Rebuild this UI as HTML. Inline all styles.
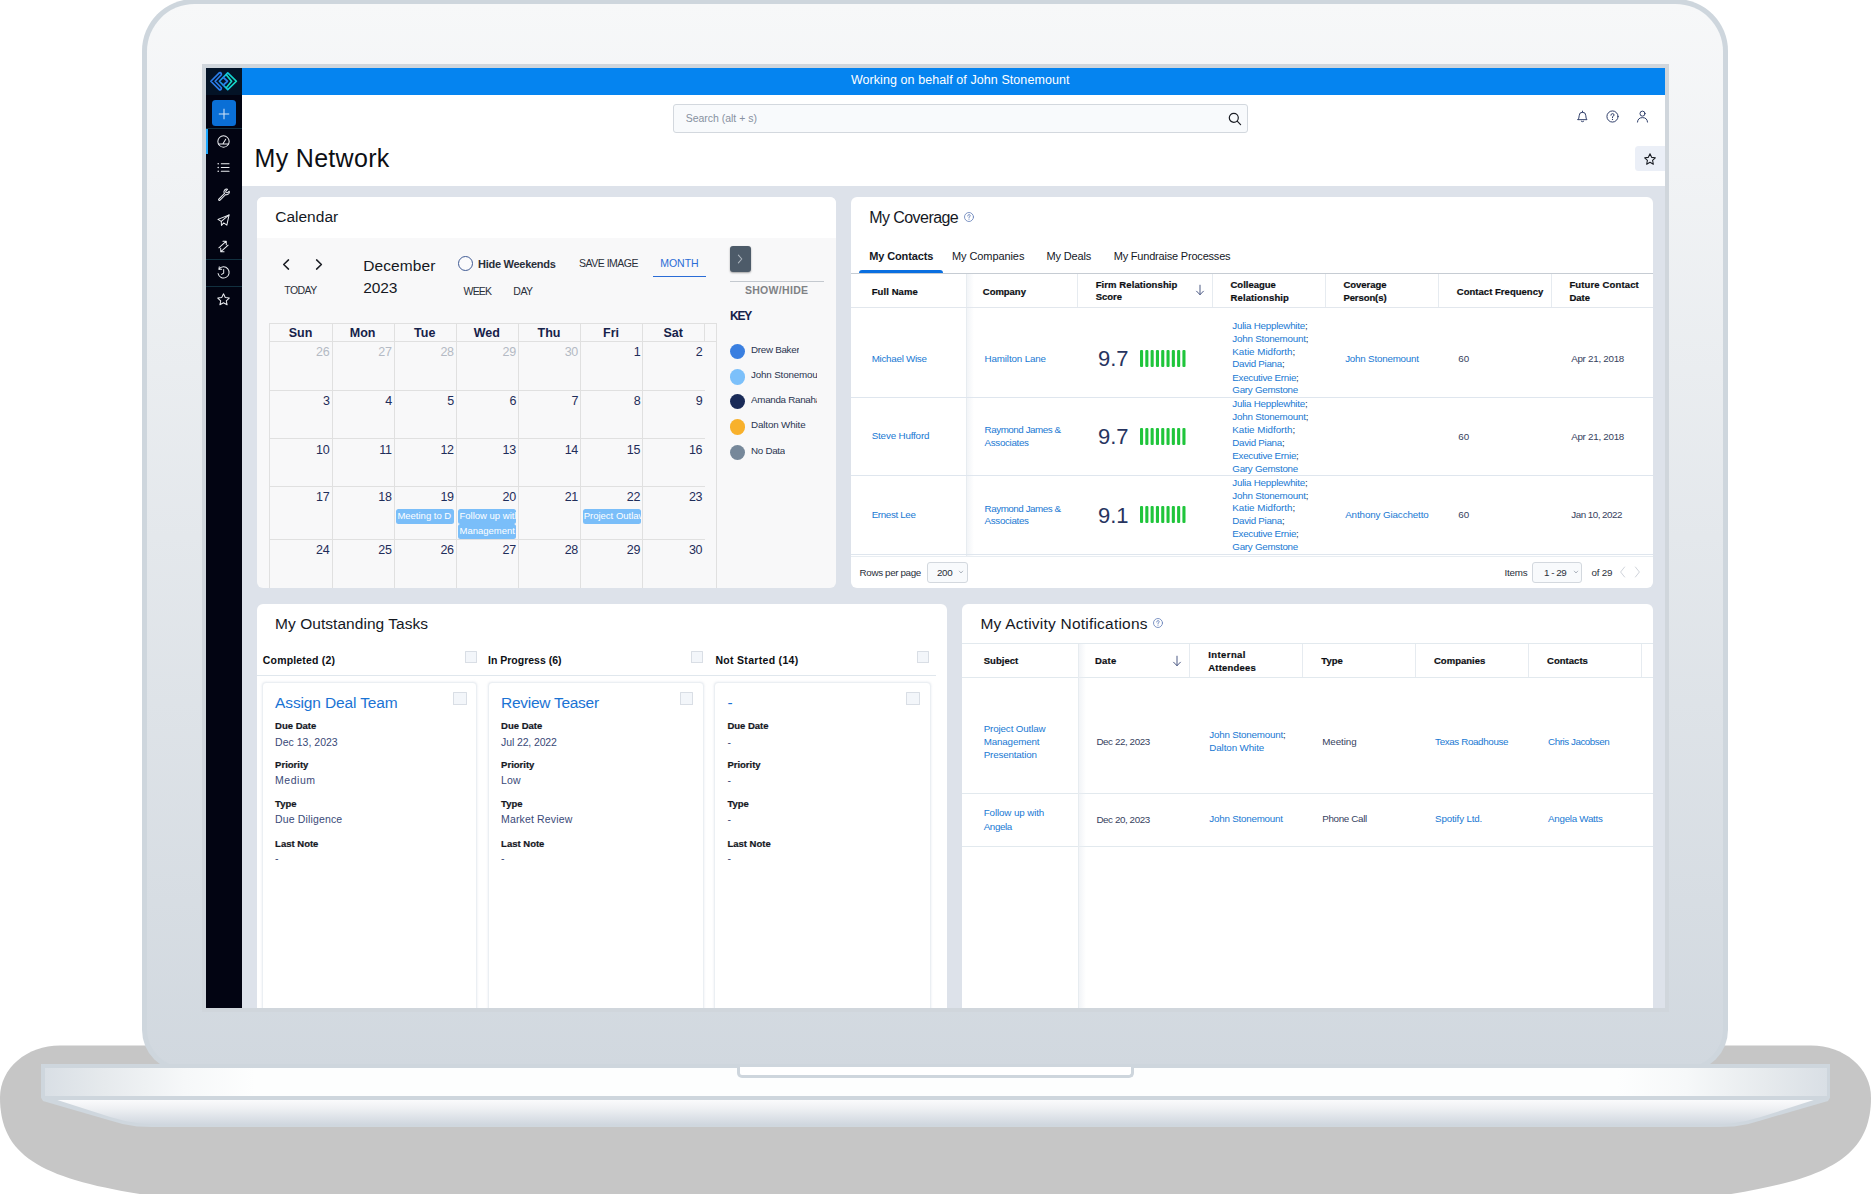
<!DOCTYPE html>
<html lang="en">
<head>
<meta charset="utf-8">
<title>My Network</title>
<style>
*{box-sizing:border-box;margin:0;padding:0}
html,body{width:1871px;height:1194px;overflow:hidden;background:#fff;font-family:"Liberation Sans",sans-serif;}
#stage{position:absolute;left:0;top:0;width:1871px;height:1194px;overflow:hidden;background:#fff}
#shadow{position:absolute;left:0;top:0}
#lid{position:absolute;left:142px;top:-1px;width:1586px;height:1073px;
  border-radius:52px 52px 42.3px 42.3px;
  background:#ced6dd;}
#lidin{position:absolute;left:146.7px;top:3.6px;width:1576.6px;height:1063.7px;
  border-radius:47.5px 47.5px 37.6px 37.6px;
  background:linear-gradient(to bottom,rgb(247,248,249) 0px,rgb(209,216,223) 1064px);}
#bezel{position:absolute;left:202px;top:63.5px;width:1467px;height:948.5px;background:#d0d6dc}
#base{position:absolute;left:41px;top:1064px;width:1789px;height:36px;background:#ced6dd;border-radius:0 0 4px 4px}
#basein{position:absolute;left:44.5px;top:1068px;width:1782px;height:27.9px;
  background:linear-gradient(to right,#d9dfe5 0,#e6eaed 60px,#f6f8f9 140px,#fdfefe 210px,#fdfefe 1572px,#f6f8f9 1642px,#e6eaed 1722px,#d9dfe5 1782px)}
#notch{position:absolute;left:736.5px;top:1067px;width:397.5px;height:11px;border:3px solid #ced6dd;border-top:none;border-radius:0 0 5px 5px;background:#fff}
#screen{position:absolute;left:206px;top:68px;width:1459px;height:940px;overflow:hidden;background:#dde2ea}
#ui{position:absolute;left:-206px;top:-68px;width:1871px;height:1194px}
.t{position:absolute;white-space:nowrap}
.a{position:absolute}
.card{position:absolute;background:#fff;border-radius:6px;overflow:hidden}
.vl{position:absolute;width:1px;background:#e6ebf0}
.hl{position:absolute;height:1px;background:#e0e7ed}
.cb{position:absolute;border:1px solid #d9dee5;background:#f3f6fa;border-radius:0.5px}
svg{position:absolute;overflow:visible}
</style>
</head>
<body>
<div id="stage">
<svg id="shadow" width="1871" height="1194" viewBox="0 0 1871 1194">
  <path fill="#c6c6c6" d="M150 1045.5 L60 1045.5 C27 1045.5 0 1068 0 1097.5 C0 1155 40 1178 139.8 1194 L1731.2 1194 C1831 1178 1871 1155 1871 1097.5 C1871 1068 1844 1045.5 1811 1045.5 L1721 1045.5 Z"/>
</svg>
<div id="lid"></div>
<div id="lidin"></div>
<svg width="1871" height="1194" viewBox="0 0 1871 1194">
  <defs>
    <linearGradient id="lg1" x1="0" y1="1099" x2="0" y2="1127" gradientUnits="userSpaceOnUse">
      <stop offset="0" stop-color="#fcfcfd"/><stop offset="0.35" stop-color="#eef0f3"/><stop offset="1" stop-color="#cbd3dc"/>
    </linearGradient>
  </defs>
  <path fill="#cfd7de" d="M41.1 1096 L41.1 1097.2 L43 1101 L110.2 1120.4 Q124 1125 137 1126.6 L152 1127.1 L1719 1127.1 L1734 1126.6 Q1747 1125 1760.8 1120.4 L1828 1101 L1829.9 1097.2 L1829.9 1096 Z"/>
  <path fill="url(#lg1)" d="M55.7 1099.6 L110.2 1117.1 Q124 1121.6 140 1123.6 L160 1125.2 L1711 1125.2 L1731 1123.6 Q1747 1121.6 1760.8 1117.1 L1815.3 1099.6 Z"/>
</svg>
<div id="base"></div>
<div id="basein"></div>
<div id="notch"></div>
<div id="bezel"></div>
<div id="screen"><div id="ui">
<div class="a" style="left:242px;top:95px;width:1423px;height:90.7px;background:#fff"></div>
<div class="a" style="left:242px;top:68px;width:1423px;height:27px;background:#0584f0"></div>
<div class="a" style="left:206px;top:68px;width:36px;height:940px;background:#020412"></div>
<div class="a" style="left:206px;top:68px;width:36px;height:27px;background:#031326"></div>
<svg style="left:204px;top:66px" width="40" height="30" viewBox="0 0 160 120">
<defs><linearGradient id="lgT" x1="60" y1="0" x2="130" y2="0" gradientUnits="userSpaceOnUse"><stop offset="0" stop-color="#1f86ea"/><stop offset="0.45" stop-color="#12c6e0"/><stop offset="1" stop-color="#14e0c2"/></linearGradient></defs>
<g fill="none" stroke-width="6.8" stroke-linejoin="round" stroke-linecap="round">
<path stroke="#2b7de9" d="M61 27.5 L27.5 61 L61 94.5 Q66 97 69 91 L69.5 87 L44.5 61 L69.5 35 L69 30 Q66 25 61 27.5 Z"/>
<path stroke="url(#lgT)" d="M95 27.5 L129.5 61 L95 94.5 L61.5 61 Z"/>
<path stroke="#16d8c8" d="M90 36 L110.5 61 L90 86"/>
<path stroke="#2b7de9" d="M77.5 46 L94 61 L77.5 76"/>
</g></svg>
<div class="a" style="left:211.6px;top:100.2px;width:24.4px;height:26px;background:#0a6fd6;border-radius:3.5px"></div>
<svg style="left:217.6px;top:108px" width="12" height="12" viewBox="0 0 12 12"><path d="M6 0.8V11.2M0.8 6H11.2" stroke="#d4e5f8" stroke-width="1.05" fill="none"/></svg>
<div class="a" style="left:206px;top:127.5px;width:36px;height:1px;background:#12303f"></div>
<div class="a" style="left:206px;top:259.0px;width:36px;height:1px;background:#12303f"></div>
<div class="a" style="left:206px;top:285.8px;width:36px;height:1px;background:#12303f"></div>
<div class="a" style="left:206px;top:128.6px;width:2px;height:25.4px;background:#1ea7fd"></div>
<svg style="left:217.1px;top:134.7px" width="13" height="13" viewBox="0 0 14 14"><g fill="none" stroke="#eceef2" stroke-width="1.08" stroke-linecap="round" stroke-linejoin="round"><circle cx="7" cy="7" r="6.1"/><path d="M1.6 9.6H12.4M6.4 9.4L9.4 4.6"/></g></svg>
<svg style="left:217.1px;top:160.9px" width="13" height="13" viewBox="0 0 14 14"><g fill="none" stroke="#eceef2" stroke-width="1.08" stroke-linecap="round" stroke-linejoin="round"><path d="M4.6 3H13M4.6 7H13M4.6 11H13"/><path stroke-width="1.7" d="M1.3 3h.01M1.3 7h.01M1.3 11h.01"/></g></svg>
<svg style="left:216.9px;top:187.5px" width="13" height="13" viewBox="0 0 14 14"><g fill="none" stroke="#eceef2" stroke-width="1.08" stroke-linecap="round" stroke-linejoin="round"><path d="M8.2 5.8 L2.2 11.8 Q1.2 12.9 2.1 13.2 Q2.9 13.6 3.6 12.8 L9.4 7 Q11.6 7.6 12.8 6 Q13.6 4.8 13.2 3.4 L11.2 5.2 L9.7 4.9 L9.4 3.3 L11.3 1.4 Q9.6 0.8 8.3 2 Q7 3.4 7.6 5.2 Z"/></g></svg>
<svg style="left:216.9px;top:213.5px" width="13" height="13" viewBox="0 0 14 14"><g fill="none" stroke="#eceef2" stroke-width="1.08" stroke-linecap="round" stroke-linejoin="round"><path d="M13 1 L1 5.8 L4.6 8 L4.8 12.4 L7.2 9.6 L10.6 12 Z"/><path d="M13 1 L4.6 8"/></g></svg>
<svg style="left:216.9px;top:239.9px" width="13" height="13" viewBox="0 0 14 14"><g fill="none" stroke="#eceef2" stroke-width="1.08" stroke-linecap="round" stroke-linejoin="round"><path d="M2 8.4 L9.8 1.6 M6.4 1.4 H10 V5"/><path d="M12 5.6 L4.2 12.4 M7.6 12.6 H4 V9"/></g></svg>
<svg style="left:216.9px;top:266.3px" width="13" height="13" viewBox="0 0 14 14"><g fill="none" stroke="#eceef2" stroke-width="1.08" stroke-linecap="round" stroke-linejoin="round"><path d="M2.2 3.4 A6 6 0 1 1 1.2 8.2"/><path d="M2.4 0.8 L2.2 3.6 L5 3.6"/><path d="M7.2 3.8 V7.6 L5 9"/></g></svg>
<svg style="left:216.9px;top:293.1px" width="13" height="13" viewBox="0 0 14 14"><g fill="none" stroke="#eceef2" stroke-width="1.08" stroke-linecap="round" stroke-linejoin="round"><path d="M7 0.9 L8.9 4.9 L13.2 5.4 L10 8.4 L10.9 12.7 L7 10.5 L3.1 12.7 L4 8.4 L0.8 5.4 L5.1 4.9 Z"/></g></svg>
<div class="a" style="left:672.8px;top:104px;width:574.8px;height:29.4px;background:#f8fafc;border:1px solid #d3d8de;border-radius:3px"></div>
<svg style="left:1228px;top:112px" width="14" height="14" viewBox="0 0 14 14"><g fill="none" stroke="#1a1d24" stroke-width="1.2" stroke-linecap="round"><circle cx="5.8" cy="5.8" r="4.5"/><path d="M9.2 9.2L12.6 12.6"/></g></svg>
<svg style="left:1575.9px;top:110px" width="13" height="13" viewBox="0 0 14 14"><g fill="none" stroke="#2a3a66" stroke-width="1.05" stroke-linecap="round" stroke-linejoin="round"><path d="M2.2 10.4 H11.8 Q10.6 9.2 10.6 6.2 Q10.6 2.4 7 2.4 Q3.4 2.4 3.4 6.2 Q3.4 9.2 2.2 10.4 Z"/><path d="M5.8 12.2 Q7 13.2 8.2 12.2"/><path d="M7 1.2V2.4"/></g></svg>
<svg style="left:1606.1px;top:109.9px" width="13" height="13" viewBox="0 0 14 14"><g fill="none" stroke="#2a3a66" stroke-width="1.05" stroke-linecap="round" stroke-linejoin="round"><circle cx="7" cy="7" r="6"/><path d="M5.3 5.6 Q5.3 3.9 7 3.9 Q8.7 3.9 8.7 5.4 Q8.7 6.4 7 7.2 V8.2"/><path stroke-width="1.3" d="M7 10.1h.01"/></g></svg>
<svg style="left:1636.1px;top:109.7px" width="13" height="13" viewBox="0 0 14 14"><g fill="none" stroke="#2a3a66" stroke-width="1.05" stroke-linecap="round" stroke-linejoin="round"><circle cx="7" cy="3.9" r="2.7"/><path d="M1.6 13 Q2 8.2 7 8.2 Q12 8.2 12.4 13"/></g></svg>
<div class="a" style="left:1635.4px;top:146.3px;width:40px;height:25.1px;background:#ebeff7;border-radius:3.5px"></div>
<svg style="left:1644.1px;top:152.8px" width="12" height="12.4" viewBox="0 0 14 14" preserveAspectRatio="none"><path fill="none" stroke="#1a1d24" stroke-width="1.25" stroke-linejoin="round" d="M7 0.9 L8.9 4.9 L13.2 5.4 L10 8.4 L10.9 12.7 L7 10.5 L3.1 12.7 L4 8.4 L0.8 5.4 L5.1 4.9 Z"/></svg>
<div class="card" style="left:257px;top:197px;width:579.3px;height:391.3px;background:#f8f8f9"><div class="a" style="left:0;top:0;width:100%;height:40.5px;background:#fff"></div></div>
<svg style="left:281px;top:258px" width="10" height="13" viewBox="0 0 10 13"><path fill="none" stroke="#1a1d24" stroke-width="1.5" stroke-linecap="round" stroke-linejoin="round" d="M7.5 1.9 L2.7 6.5 L7.5 11.1"/></svg>
<svg style="left:313.6px;top:258px" width="10" height="13" viewBox="0 0 10 13"><path fill="none" stroke="#1a1d24" stroke-width="1.5" stroke-linecap="round" stroke-linejoin="round" d="M2.6 1.9 L7.4 6.5 L2.6 11.1"/></svg>
<div class="a" style="left:457.7px;top:255.5px;width:15.6px;height:15.6px;border:1.4px solid #405a94;border-radius:50%;background:#fbfbfc"></div>
<div class="a" style="left:652.8px;top:275.7px;width:53.2px;height:1.3px;background:#2a6cd6"></div>
<div class="a" style="left:729.8px;top:246px;width:20.8px;height:26.4px;background:#4d5b69;border-radius:3px;box-shadow:0 1px 2px rgba(0,0,0,.35)"></div>
<svg style="left:736px;top:254px" width="8" height="10" viewBox="0 0 8 10"><path fill="none" stroke="#aab3bc" stroke-width="1.1" stroke-linecap="round" stroke-linejoin="round" d="M2.4 1.2 L5.8 5 L2.4 8.8"/></svg>
<div class="a" style="left:730px;top:281px;width:94px;height:1px;background:#c4c9cf"></div>
<div class="a" style="left:729.8px;top:343.5px;width:15.4px;height:15.4px;border-radius:50%;background:#3a7fe0"></div>
<div class="a" style="left:729.8px;top:369.2px;width:15.4px;height:15.4px;border-radius:50%;background:#7cc0fa"></div>
<div class="a" style="left:729.8px;top:394.1px;width:15.4px;height:15.4px;border-radius:50%;background:#1a2b58"></div>
<div class="a" style="left:729.8px;top:419.2px;width:15.4px;height:15.4px;border-radius:50%;background:#f8b12c"></div>
<div class="a" style="left:729.8px;top:444.9px;width:15.4px;height:15.4px;border-radius:50%;background:#76889a"></div>
<div class="a" style="left:269.40px;top:323.4px;width:1px;height:265.1px;background:#e0e0e0"></div>
<div class="a" style="left:331.53px;top:323.4px;width:1px;height:265.1px;background:#e0e0e0"></div>
<div class="a" style="left:393.66px;top:323.4px;width:1px;height:265.1px;background:#e0e0e0"></div>
<div class="a" style="left:455.79px;top:323.4px;width:1px;height:265.1px;background:#e0e0e0"></div>
<div class="a" style="left:517.92px;top:323.4px;width:1px;height:265.1px;background:#e0e0e0"></div>
<div class="a" style="left:580.05px;top:323.4px;width:1px;height:265.1px;background:#e0e0e0"></div>
<div class="a" style="left:642.18px;top:323.4px;width:1px;height:265.1px;background:#e0e0e0"></div>
<div class="a" style="left:704.31px;top:323.4px;width:1px;height:17.6px;background:#e0e0e0"></div>
<div class="a" style="left:716.1px;top:323.4px;width:1px;height:265.1px;background:#e0e0e0"></div>
<div class="a" style="left:269.4px;top:322.9px;width:447.2px;height:1px;background:#e0e0e0"></div>
<div class="a" style="left:269.4px;top:340.5px;width:447.2px;height:1px;background:#e0e0e0"></div>
<div class="a" style="left:269.4px;top:390.0px;width:435.4px;height:1px;background:#e0e0e0"></div>
<div class="a" style="left:269.4px;top:438.2px;width:435.4px;height:1px;background:#e0e0e0"></div>
<div class="a" style="left:269.4px;top:485.7px;width:435.4px;height:1px;background:#e0e0e0"></div>
<div class="a" style="left:269.4px;top:538.9px;width:435.4px;height:1px;background:#e0e0e0"></div>
<div class="a" style="left:396.2px;top:508.9px;width:58.1px;height:14.8px;background:#7abef9;border-radius:2.5px;overflow:hidden"><span class="t" style="left:1.2px;top:0;font-size:9.5px;line-height:14.8px;color:#fff">Meeting to D</span></div>
<div class="a" style="left:458.3px;top:508.9px;width:58.1px;height:14.9px;background:#7abef9;border-radius:2.5px;overflow:hidden"><span class="t" style="left:1.2px;top:0;font-size:9.5px;line-height:14.9px;color:#fff">Follow up with</span></div>
<div class="a" style="left:458.3px;top:524.1px;width:58.1px;height:14.6px;background:#7abef9;border-radius:2.5px;overflow:hidden"><span class="t" style="left:1.2px;top:0;font-size:9.5px;line-height:14.6px;color:#fff">Management</span></div>
<div class="a" style="left:582.5px;top:508.9px;width:58.1px;height:14.8px;background:#7abef9;border-radius:2.5px;overflow:hidden"><span class="t" style="left:1.2px;top:0;font-size:9.5px;line-height:14.8px;color:#fff">Project Outlaw</span></div>
<div class="card" style="left:851px;top:197.4px;width:801.7px;height:391.0px"></div>
<svg style="left:963.4px;top:211px" width="12" height="12" viewBox="0 0 12 12"><g fill="none" stroke="#6a84bb" stroke-width="0.85" stroke-linecap="round"><circle cx="6" cy="6" r="4.5"/><path d="M4.7 5 Q4.7 3.6 6 3.6 Q7.3 3.6 7.3 4.8 Q7.3 5.6 6 6.2 V6.9"/><path stroke-width="1" d="M6 8.3h.01"/></g></svg>
<div class="a" style="left:851px;top:272.8px;width:801.7px;height:1px;background:#c6ccd3"></div>
<div class="a" style="left:859px;top:270px;width:84px;height:3.4px;background:#0a6fe0;border-radius:3px 3px 0 0"></div>
<div class="vl" style="left:1077.0px;top:274px;height:33.3px"></div>
<div class="vl" style="left:1211.8px;top:274px;height:33.3px"></div>
<div class="vl" style="left:1324.7px;top:274px;height:33.3px"></div>
<div class="vl" style="left:1437.5px;top:274px;height:33.3px"></div>
<div class="vl" style="left:1550.5px;top:274px;height:33.3px"></div>
<div class="a" style="left:965.7px;top:274px;width:9px;height:282px;background:linear-gradient(to right,#e7ecf0 0,#e7ecf0 1px,rgba(233,237,242,.6) 1px,rgba(255,255,255,0) 8px)"></div>
<div class="hl" style="left:851px;top:306.8px;width:801.7px;background:#e2e7ed"></div>
<div class="hl" style="left:851px;top:397.2px;width:801.7px;background:#dfe6ee"></div>
<div class="hl" style="left:851px;top:475.0px;width:801.7px;background:#dfe6ee"></div>
<div class="hl" style="left:851px;top:553.7px;width:801.7px;background:#dfe6ee"></div>
<div class="hl" style="left:851px;top:556.1px;width:801.7px;background:#e8edf2"></div>
<svg style="left:1194.7px;top:284.2px" width="10" height="12" viewBox="0 0 10 12"><path fill="none" stroke="#3b4a78" stroke-width="0.9" stroke-linecap="round" stroke-linejoin="round" d="M5 1.2 V10.6 M1.6 7.2 L5 10.7 L8.4 7.2"/></svg>
<svg style="left:1140.2px;top:350px" width="46" height="17.0" fill="#1fc53b"><rect x="0.00" y="0" width="3.1" height="17.0" rx="1.1"/><rect x="5.30" y="0" width="3.1" height="17.0" rx="1.1"/><rect x="10.60" y="0" width="3.1" height="17.0" rx="1.1"/><rect x="15.90" y="0" width="3.1" height="17.0" rx="1.1"/><rect x="21.20" y="0" width="3.1" height="17.0" rx="1.1"/><rect x="26.50" y="0" width="3.1" height="17.0" rx="1.1"/><rect x="31.80" y="0" width="3.1" height="17.0" rx="1.1"/><rect x="37.10" y="0" width="3.1" height="17.0" rx="1.1"/><rect x="42.40" y="0" width="3.1" height="17.0" rx="1.1"/></svg>
<svg style="left:1140.2px;top:428px" width="46" height="17.0" fill="#1fc53b"><rect x="0.00" y="0" width="3.1" height="17.0" rx="1.1"/><rect x="5.30" y="0" width="3.1" height="17.0" rx="1.1"/><rect x="10.60" y="0" width="3.1" height="17.0" rx="1.1"/><rect x="15.90" y="0" width="3.1" height="17.0" rx="1.1"/><rect x="21.20" y="0" width="3.1" height="17.0" rx="1.1"/><rect x="26.50" y="0" width="3.1" height="17.0" rx="1.1"/><rect x="31.80" y="0" width="3.1" height="17.0" rx="1.1"/><rect x="37.10" y="0" width="3.1" height="17.0" rx="1.1"/><rect x="42.40" y="0" width="3.1" height="17.0" rx="1.1"/></svg>
<svg style="left:1140.2px;top:506.4px" width="46" height="17.0" fill="#1fc53b"><rect x="0.00" y="0" width="3.1" height="17.0" rx="1.1"/><rect x="5.30" y="0" width="3.1" height="17.0" rx="1.1"/><rect x="10.60" y="0" width="3.1" height="17.0" rx="1.1"/><rect x="15.90" y="0" width="3.1" height="17.0" rx="1.1"/><rect x="21.20" y="0" width="3.1" height="17.0" rx="1.1"/><rect x="26.50" y="0" width="3.1" height="17.0" rx="1.1"/><rect x="31.80" y="0" width="3.1" height="17.0" rx="1.1"/><rect x="37.10" y="0" width="3.1" height="17.0" rx="1.1"/><rect x="42.40" y="0" width="3.1" height="17.0" rx="1.1"/></svg>
<div class="a" style="left:926.5px;top:561.6px;width:41.3px;height:21.8px;background:#f8fafc;border:1px solid #d3d8de;border-radius:3px"></div>
<svg style="left:958.3px;top:569.6px" width="6" height="4" viewBox="0 0 6 4"><path fill="none" stroke="#9aa3af" stroke-width="0.8" d="M1 0.8 L3 3 L5 0.8"/></svg>
<div class="a" style="left:1532.3px;top:561.8px;width:49.7px;height:21.6px;background:#f8fafc;border:1px solid #d3d8de;border-radius:3px"></div>
<svg style="left:1572.8px;top:569.6px" width="6" height="4" viewBox="0 0 6 4"><path fill="none" stroke="#9aa3af" stroke-width="0.8" d="M1 0.8 L3 3 L5 0.8"/></svg>
<svg style="left:1617.9px;top:566.3px" width="9" height="12" viewBox="0 0 9 12"><path fill="none" stroke="#c9ced6" stroke-width="0.9" stroke-linecap="round" stroke-linejoin="round" d="M6.6 1 L2.6 6 L6.6 11"/></svg>
<svg style="left:1632.8px;top:566.3px" width="9" height="12" viewBox="0 0 9 12"><path fill="none" stroke="#c9ced6" stroke-width="0.9" stroke-linecap="round" stroke-linejoin="round" d="M2.4 1 L6.4 6 L2.4 11"/></svg>
<div class="card" style="left:257px;top:604px;width:690px;height:420px"></div>
<div class="cb" style="left:465.3px;top:651.2px;width:12.2px;height:12.2px"></div>
<div class="cb" style="left:691.1px;top:651.2px;width:12.2px;height:12.2px"></div>
<div class="cb" style="left:917.2px;top:651.2px;width:12.2px;height:12.2px"></div>
<div class="hl" style="left:257px;top:674.8px;width:678.5px"></div>
<div class="a" style="left:262.1px;top:682.2px;width:215.4px;height:340px;border:1px solid #ebeff3;border-radius:4px;background:#fff;box-shadow:0 0 2.5px rgba(170,180,198,.3)"></div>
<div class="cb" style="left:453.1px;top:691.8px;width:13.6px;height:13.6px"></div>
<div class="a" style="left:488.1px;top:682.2px;width:216.2px;height:340px;border:1px solid #ebeff3;border-radius:4px;background:#fff;box-shadow:0 0 2.5px rgba(170,180,198,.3)"></div>
<div class="cb" style="left:679.9px;top:691.8px;width:13.6px;height:13.6px"></div>
<div class="a" style="left:714.4px;top:682.2px;width:216.4px;height:340px;border:1px solid #ebeff3;border-radius:4px;background:#fff;box-shadow:0 0 2.5px rgba(170,180,198,.3)"></div>
<div class="cb" style="left:906.4px;top:691.8px;width:13.6px;height:13.6px"></div>
<div class="card" style="left:962.2px;top:604px;width:690.5px;height:420px"></div>
<svg style="left:1152.4px;top:617.3px" width="12" height="12" viewBox="0 0 12 12"><g fill="none" stroke="#6a84bb" stroke-width="0.85" stroke-linecap="round"><circle cx="6" cy="6" r="4.5"/><path d="M4.7 5 Q4.7 3.6 6 3.6 Q7.3 3.6 7.3 4.8 Q7.3 5.6 6 6.2 V6.9"/><path stroke-width="1" d="M6 8.3h.01"/></g></svg>
<div class="hl" style="left:962.2px;top:642.9px;width:690.5px;background:#e2e9ee"></div>
<div class="hl" style="left:962.2px;top:676.5px;width:690.5px;background:#e2e9ee"></div>
<div class="hl" style="left:962.2px;top:792.7px;width:690.5px;background:#e2e9ee"></div>
<div class="hl" style="left:962.2px;top:845.8px;width:690.5px;background:#e2e9ee"></div>
<div class="vl" style="left:1189.0px;top:644px;height:33px"></div>
<div class="vl" style="left:1302.0px;top:644px;height:33px"></div>
<div class="vl" style="left:1415.0px;top:644px;height:33px"></div>
<div class="vl" style="left:1528.0px;top:644px;height:33px"></div>
<div class="vl" style="left:1641.0px;top:644px;height:33px"></div>
<div class="a" style="left:1077.5px;top:644px;width:9px;height:380px;background:linear-gradient(to right,#e7ecf0 0,#e7ecf0 1px,rgba(233,237,242,.6) 1px,rgba(255,255,255,0) 8px)"></div>
<svg style="left:1171.6px;top:655px" width="10" height="12" viewBox="0 0 10 12"><path fill="none" stroke="#3b4a78" stroke-width="0.9" stroke-linecap="round" stroke-linejoin="round" d="M5 1.2 V10.6 M1.6 7.2 L5 10.7 L8.4 7.2"/></svg>
<span class="t" style="left:850.89px;top:72.27px;font-size:12.5px;line-height:16px;color:#fff;letter-spacing:0.078px;">Working on behalf of John Stonemount</span>
<span class="t" style="left:685.70px;top:111.16px;font-size:10.5px;line-height:14px;color:#8791a0;letter-spacing:-0.019px;">Search (alt + s)</span>
<span class="t" style="left:254.60px;top:142.14px;font-size:25px;line-height:32px;color:#0d0f14;letter-spacing:0.303px;">My Network</span>
<span class="t" style="left:275.20px;top:207.23px;font-size:15.5px;line-height:20px;color:#15181f;letter-spacing:0.012px;">Calendar</span>
<span class="t" style="left:284.30px;top:283.16px;font-size:10.5px;line-height:14px;color:#2a2f3a;letter-spacing:-0.561px;">TODAY</span>
<span class="t" style="left:363.20px;top:255.63px;font-size:15.5px;line-height:20px;color:#15181f;letter-spacing:0.088px;">December</span>
<span class="t" style="left:363.20px;top:278.33px;font-size:15.5px;line-height:20px;color:#15181f;letter-spacing:-0.121px;">2023</span>
<span class="t" style="left:478.00px;top:256.99px;font-size:11px;line-height:14px;color:#2a2f3a;font-weight:700;letter-spacing:-0.270px;">Hide Weekends</span>
<span class="t" style="left:579.00px;top:256.06px;font-size:10.5px;line-height:14px;color:#2a2f3a;letter-spacing:-0.500px;">SAVE IMAGE</span>
<span class="t" style="left:660.20px;top:256.06px;font-size:10.5px;line-height:14px;color:#2a6cd6;">MONTH</span>
<span class="t" style="left:463.60px;top:284.26px;font-size:10.5px;line-height:14px;color:#2a2f3a;letter-spacing:-0.830px;">WEEK</span>
<span class="t" style="left:513.30px;top:284.26px;font-size:10.5px;line-height:14px;color:#2a2f3a;letter-spacing:-0.504px;">DAY</span>
<span class="t" style="left:744.91px;top:283.16px;font-size:10.5px;line-height:14px;color:#808285;font-weight:700;letter-spacing:0.314px;">SHOW/HIDE</span>
<span class="t" style="left:730.00px;top:307.84px;font-size:12px;line-height:16px;color:#16224a;font-weight:700;letter-spacing:-1.163px;">KEY</span>
<span class="t" style="left:751.00px;top:342.60px;font-size:9.8px;line-height:13px;color:#2a3550;letter-spacing:-0.279px;max-width:66px;overflow:hidden;">Drew Baker</span>
<span class="t" style="left:751.00px;top:367.90px;font-size:9.8px;line-height:13px;color:#2a3550;letter-spacing:-0.153px;max-width:66px;overflow:hidden;">John Stonemount</span>
<span class="t" style="left:751.00px;top:392.80px;font-size:9.8px;line-height:13px;color:#2a3550;letter-spacing:-0.285px;max-width:66px;overflow:hidden;">Amanda Ranahan</span>
<span class="t" style="left:751.00px;top:417.90px;font-size:9.8px;line-height:13px;color:#2a3550;letter-spacing:-0.133px;max-width:66px;overflow:hidden;">Dalton White</span>
<span class="t" style="left:751.00px;top:443.80px;font-size:9.8px;line-height:13px;color:#2a3550;letter-spacing:-0.279px;max-width:66px;overflow:hidden;">No Data</span>
<span class="t" style="left:288.66px;top:324.57px;font-size:12.5px;line-height:16px;color:#16224a;font-weight:700;">Sun</span>
<span class="t" style="left:349.75px;top:324.57px;font-size:12.5px;line-height:16px;color:#16224a;font-weight:700;">Mon</span>
<span class="t" style="left:414.08px;top:324.57px;font-size:12.5px;line-height:16px;color:#16224a;font-weight:700;">Tue</span>
<span class="t" style="left:473.77px;top:324.57px;font-size:12.5px;line-height:16px;color:#16224a;font-weight:700;">Wed</span>
<span class="t" style="left:537.52px;top:324.57px;font-size:12.5px;line-height:16px;color:#16224a;font-weight:700;">Thu</span>
<span class="t" style="left:603.12px;top:324.57px;font-size:12.5px;line-height:16px;color:#16224a;font-weight:700;">Fri</span>
<span class="t" style="left:663.52px;top:324.57px;font-size:12.5px;line-height:16px;color:#16224a;font-weight:700;">Sat</span>
<span class="t" style="left:316.12px;top:343.97px;font-size:12.5px;line-height:16px;color:#b4bac4;letter-spacing:-0.3px;">26</span>
<span class="t" style="left:378.25px;top:343.97px;font-size:12.5px;line-height:16px;color:#b4bac4;letter-spacing:-0.3px;">27</span>
<span class="t" style="left:440.38px;top:343.97px;font-size:12.5px;line-height:16px;color:#b4bac4;letter-spacing:-0.3px;">28</span>
<span class="t" style="left:502.51px;top:343.97px;font-size:12.5px;line-height:16px;color:#b4bac4;letter-spacing:-0.3px;">29</span>
<span class="t" style="left:564.64px;top:343.97px;font-size:12.5px;line-height:16px;color:#b4bac4;letter-spacing:-0.3px;">30</span>
<span class="t" style="left:633.73px;top:343.97px;font-size:12.5px;line-height:16px;color:#1f2d5a;letter-spacing:-0.3px;">1</span>
<span class="t" style="left:695.86px;top:343.97px;font-size:12.5px;line-height:16px;color:#1f2d5a;letter-spacing:-0.3px;">2</span>
<span class="t" style="left:323.08px;top:393.47px;font-size:12.5px;line-height:16px;color:#1f2d5a;letter-spacing:-0.3px;">3</span>
<span class="t" style="left:385.21px;top:393.47px;font-size:12.5px;line-height:16px;color:#1f2d5a;letter-spacing:-0.3px;">4</span>
<span class="t" style="left:447.34px;top:393.47px;font-size:12.5px;line-height:16px;color:#1f2d5a;letter-spacing:-0.3px;">5</span>
<span class="t" style="left:509.47px;top:393.47px;font-size:12.5px;line-height:16px;color:#1f2d5a;letter-spacing:-0.3px;">6</span>
<span class="t" style="left:571.60px;top:393.47px;font-size:12.5px;line-height:16px;color:#1f2d5a;letter-spacing:-0.3px;">7</span>
<span class="t" style="left:633.73px;top:393.47px;font-size:12.5px;line-height:16px;color:#1f2d5a;letter-spacing:-0.3px;">8</span>
<span class="t" style="left:695.86px;top:393.47px;font-size:12.5px;line-height:16px;color:#1f2d5a;letter-spacing:-0.3px;">9</span>
<span class="t" style="left:316.12px;top:441.67px;font-size:12.5px;line-height:16px;color:#1f2d5a;letter-spacing:-0.3px;">10</span>
<span class="t" style="left:379.18px;top:441.67px;font-size:12.5px;line-height:16px;color:#1f2d5a;letter-spacing:-0.3px;">11</span>
<span class="t" style="left:440.38px;top:441.67px;font-size:12.5px;line-height:16px;color:#1f2d5a;letter-spacing:-0.3px;">12</span>
<span class="t" style="left:502.51px;top:441.67px;font-size:12.5px;line-height:16px;color:#1f2d5a;letter-spacing:-0.3px;">13</span>
<span class="t" style="left:564.64px;top:441.67px;font-size:12.5px;line-height:16px;color:#1f2d5a;letter-spacing:-0.3px;">14</span>
<span class="t" style="left:626.77px;top:441.67px;font-size:12.5px;line-height:16px;color:#1f2d5a;letter-spacing:-0.3px;">15</span>
<span class="t" style="left:688.90px;top:441.67px;font-size:12.5px;line-height:16px;color:#1f2d5a;letter-spacing:-0.3px;">16</span>
<span class="t" style="left:316.12px;top:489.17px;font-size:12.5px;line-height:16px;color:#1f2d5a;letter-spacing:-0.3px;">17</span>
<span class="t" style="left:378.25px;top:489.17px;font-size:12.5px;line-height:16px;color:#1f2d5a;letter-spacing:-0.3px;">18</span>
<span class="t" style="left:440.38px;top:489.17px;font-size:12.5px;line-height:16px;color:#1f2d5a;letter-spacing:-0.3px;">19</span>
<span class="t" style="left:502.51px;top:489.17px;font-size:12.5px;line-height:16px;color:#1f2d5a;letter-spacing:-0.3px;">20</span>
<span class="t" style="left:564.64px;top:489.17px;font-size:12.5px;line-height:16px;color:#1f2d5a;letter-spacing:-0.3px;">21</span>
<span class="t" style="left:626.77px;top:489.17px;font-size:12.5px;line-height:16px;color:#1f2d5a;letter-spacing:-0.3px;">22</span>
<span class="t" style="left:688.90px;top:489.17px;font-size:12.5px;line-height:16px;color:#1f2d5a;letter-spacing:-0.3px;">23</span>
<span class="t" style="left:316.12px;top:542.37px;font-size:12.5px;line-height:16px;color:#1f2d5a;letter-spacing:-0.3px;">24</span>
<span class="t" style="left:378.25px;top:542.37px;font-size:12.5px;line-height:16px;color:#1f2d5a;letter-spacing:-0.3px;">25</span>
<span class="t" style="left:440.38px;top:542.37px;font-size:12.5px;line-height:16px;color:#1f2d5a;letter-spacing:-0.3px;">26</span>
<span class="t" style="left:502.51px;top:542.37px;font-size:12.5px;line-height:16px;color:#1f2d5a;letter-spacing:-0.3px;">27</span>
<span class="t" style="left:564.64px;top:542.37px;font-size:12.5px;line-height:16px;color:#1f2d5a;letter-spacing:-0.3px;">28</span>
<span class="t" style="left:626.77px;top:542.37px;font-size:12.5px;line-height:16px;color:#1f2d5a;letter-spacing:-0.3px;">29</span>
<span class="t" style="left:688.90px;top:542.37px;font-size:12.5px;line-height:16px;color:#1f2d5a;letter-spacing:-0.3px;">30</span>
<span class="t" style="left:869.20px;top:206.96px;font-size:16px;line-height:21px;color:#15181f;letter-spacing:-0.560px;">My Coverage</span>
<span class="t" style="left:869.20px;top:249.19px;font-size:11px;line-height:14px;color:#15181f;font-weight:700;letter-spacing:-0.128px;">My Contacts</span>
<span class="t" style="left:952.00px;top:249.19px;font-size:11px;line-height:14px;color:#15181f;letter-spacing:-0.088px;">My Companies</span>
<span class="t" style="left:1046.60px;top:249.19px;font-size:11px;line-height:14px;color:#15181f;letter-spacing:-0.180px;">My Deals</span>
<span class="t" style="left:1113.70px;top:249.19px;font-size:11px;line-height:14px;color:#15181f;letter-spacing:-0.198px;">My Fundraise Processes</span>
<span class="t" style="left:871.70px;top:285.81px;font-size:9.5px;line-height:12px;color:#0d0f14;font-weight:700;letter-spacing:0.088px;-webkit-text-stroke:0.2px;">Full Name</span>
<span class="t" style="left:982.80px;top:285.81px;font-size:9.5px;line-height:12px;color:#0d0f14;font-weight:700;letter-spacing:-0.028px;-webkit-text-stroke:0.2px;">Company</span>
<span class="t" style="left:1095.70px;top:279.01px;font-size:9.5px;line-height:12px;color:#0d0f14;font-weight:700;letter-spacing:0.086px;-webkit-text-stroke:0.2px;">Firm Relationship</span>
<span class="t" style="left:1095.70px;top:291.41px;font-size:9.5px;line-height:12px;color:#0d0f14;font-weight:700;-webkit-text-stroke:0.2px;">Score</span>
<span class="t" style="left:1230.50px;top:279.21px;font-size:9.5px;line-height:12px;color:#0d0f14;font-weight:700;-webkit-text-stroke:0.2px;">Colleague</span>
<span class="t" style="left:1230.50px;top:291.51px;font-size:9.5px;line-height:12px;color:#0d0f14;font-weight:700;letter-spacing:0.124px;-webkit-text-stroke:0.2px;">Relationship</span>
<span class="t" style="left:1343.40px;top:279.21px;font-size:9.5px;line-height:12px;color:#0d0f14;font-weight:700;letter-spacing:-0.027px;-webkit-text-stroke:0.2px;">Coverage</span>
<span class="t" style="left:1343.40px;top:291.51px;font-size:9.5px;line-height:12px;color:#0d0f14;font-weight:700;letter-spacing:-0.081px;-webkit-text-stroke:0.2px;">Person(s)</span>
<span class="t" style="left:1456.80px;top:285.61px;font-size:9.5px;line-height:12px;color:#0d0f14;font-weight:700;letter-spacing:0.027px;-webkit-text-stroke:0.2px;">Contact Frequency</span>
<span class="t" style="left:1569.40px;top:279.21px;font-size:9.5px;line-height:12px;color:#0d0f14;font-weight:700;letter-spacing:0.138px;-webkit-text-stroke:0.2px;">Future Contact</span>
<span class="t" style="left:1569.40px;top:291.51px;font-size:9.5px;line-height:12px;color:#0d0f14;font-weight:700;-webkit-text-stroke:0.2px;">Date</span>
<span class="t" style="left:871.70px;top:352.00px;font-size:9.8px;line-height:13px;color:#2079d3;letter-spacing:-0.272px;">Michael Wise</span>
<span class="t" style="left:984.60px;top:352.00px;font-size:9.8px;line-height:13px;color:#2079d3;letter-spacing:-0.145px;">Hamilton Lane</span>
<span class="t" style="left:1098.00px;top:344.08px;font-size:22px;line-height:29px;color:#27345f;letter-spacing:-0.098px;">9.7</span>
<span class="t" style="left:1232.30px;top:318.90px;font-size:9.8px;line-height:13px;color:#2079d3;letter-spacing:-0.241px;">Julia Hepplewhite<span style="color:#36425e">;</span></span>
<span class="t" style="left:1232.30px;top:331.60px;font-size:9.8px;line-height:13px;color:#2079d3;letter-spacing:-0.227px;">John Stonemount<span style="color:#36425e">;</span></span>
<span class="t" style="left:1232.30px;top:344.50px;font-size:9.8px;line-height:13px;color:#2079d3;letter-spacing:-0.019px;">Katie Midforth<span style="color:#36425e">;</span></span>
<span class="t" style="left:1232.30px;top:357.40px;font-size:9.8px;line-height:13px;color:#2079d3;letter-spacing:-0.289px;">David Piana<span style="color:#36425e">;</span></span>
<span class="t" style="left:1232.30px;top:370.50px;font-size:9.8px;line-height:13px;color:#2079d3;letter-spacing:-0.288px;">Executive Ernie<span style="color:#36425e">;</span></span>
<span class="t" style="left:1232.30px;top:383.40px;font-size:9.8px;line-height:13px;color:#2079d3;letter-spacing:-0.266px;">Gary Gemstone</span>
<span class="t" style="left:1345.20px;top:351.90px;font-size:9.8px;line-height:13px;color:#2079d3;letter-spacing:-0.213px;">John Stonemount</span>
<span class="t" style="left:1458.30px;top:351.90px;font-size:9.8px;line-height:13px;color:#36425e;">60</span>
<span class="t" style="left:1571.20px;top:351.90px;font-size:9.8px;line-height:13px;color:#36425e;letter-spacing:-0.276px;">Apr 21, 2018</span>
<span class="t" style="left:871.70px;top:429.30px;font-size:9.8px;line-height:13px;color:#2079d3;letter-spacing:-0.164px;">Steve Hufford</span>
<span class="t" style="left:984.60px;top:423.30px;font-size:9.8px;line-height:13px;color:#2079d3;letter-spacing:-0.451px;">Raymond James &amp;</span>
<span class="t" style="left:984.60px;top:436.00px;font-size:9.8px;line-height:13px;color:#2079d3;letter-spacing:-0.338px;">Associates</span>
<span class="t" style="left:1098.00px;top:422.08px;font-size:22px;line-height:29px;color:#27345f;letter-spacing:-0.098px;">9.7</span>
<span class="t" style="left:1232.30px;top:397.40px;font-size:9.8px;line-height:13px;color:#2079d3;letter-spacing:-0.241px;">Julia Hepplewhite<span style="color:#36425e">;</span></span>
<span class="t" style="left:1232.30px;top:410.10px;font-size:9.8px;line-height:13px;color:#2079d3;letter-spacing:-0.227px;">John Stonemount<span style="color:#36425e">;</span></span>
<span class="t" style="left:1232.30px;top:422.90px;font-size:9.8px;line-height:13px;color:#2079d3;letter-spacing:-0.019px;">Katie Midforth<span style="color:#36425e">;</span></span>
<span class="t" style="left:1232.30px;top:435.80px;font-size:9.8px;line-height:13px;color:#2079d3;letter-spacing:-0.289px;">David Piana<span style="color:#36425e">;</span></span>
<span class="t" style="left:1232.30px;top:448.70px;font-size:9.8px;line-height:13px;color:#2079d3;letter-spacing:-0.288px;">Executive Ernie<span style="color:#36425e">;</span></span>
<span class="t" style="left:1232.30px;top:461.60px;font-size:9.8px;line-height:13px;color:#2079d3;letter-spacing:-0.266px;">Gary Gemstone</span>
<span class="t" style="left:1458.30px;top:429.80px;font-size:9.8px;line-height:13px;color:#36425e;">60</span>
<span class="t" style="left:1571.20px;top:429.80px;font-size:9.8px;line-height:13px;color:#36425e;letter-spacing:-0.276px;">Apr 21, 2018</span>
<span class="t" style="left:871.70px;top:507.50px;font-size:9.8px;line-height:13px;color:#2079d3;letter-spacing:-0.359px;">Ernest Lee</span>
<span class="t" style="left:984.60px;top:501.80px;font-size:9.8px;line-height:13px;color:#2079d3;letter-spacing:-0.451px;">Raymond James &amp;</span>
<span class="t" style="left:984.60px;top:514.40px;font-size:9.8px;line-height:13px;color:#2079d3;letter-spacing:-0.338px;">Associates</span>
<span class="t" style="left:1098.00px;top:500.58px;font-size:22px;line-height:29px;color:#27345f;letter-spacing:-0.098px;">9.1</span>
<span class="t" style="left:1232.30px;top:475.60px;font-size:9.8px;line-height:13px;color:#2079d3;letter-spacing:-0.241px;">Julia Hepplewhite<span style="color:#36425e">;</span></span>
<span class="t" style="left:1232.30px;top:488.50px;font-size:9.8px;line-height:13px;color:#2079d3;letter-spacing:-0.227px;">John Stonemount<span style="color:#36425e">;</span></span>
<span class="t" style="left:1232.30px;top:501.40px;font-size:9.8px;line-height:13px;color:#2079d3;letter-spacing:-0.019px;">Katie Midforth<span style="color:#36425e">;</span></span>
<span class="t" style="left:1232.30px;top:514.20px;font-size:9.8px;line-height:13px;color:#2079d3;letter-spacing:-0.289px;">David Piana<span style="color:#36425e">;</span></span>
<span class="t" style="left:1232.30px;top:527.10px;font-size:9.8px;line-height:13px;color:#2079d3;letter-spacing:-0.288px;">Executive Ernie<span style="color:#36425e">;</span></span>
<span class="t" style="left:1232.30px;top:539.90px;font-size:9.8px;line-height:13px;color:#2079d3;letter-spacing:-0.266px;">Gary Gemstone</span>
<span class="t" style="left:1345.20px;top:508.40px;font-size:9.8px;line-height:13px;color:#2079d3;letter-spacing:-0.112px;">Anthony Giacchetto</span>
<span class="t" style="left:1458.30px;top:508.40px;font-size:9.8px;line-height:13px;color:#36425e;">60</span>
<span class="t" style="left:1571.30px;top:508.40px;font-size:9.8px;line-height:13px;color:#36425e;letter-spacing:-0.505px;">Jan 10, 2022</span>
<span class="t" style="left:859.60px;top:566.20px;font-size:9.8px;line-height:13px;color:#2a2f3a;letter-spacing:-0.354px;">Rows per page</span>
<span class="t" style="left:937.00px;top:566.20px;font-size:9.8px;line-height:13px;color:#2a2f3a;letter-spacing:-0.353px;">200</span>
<span class="t" style="left:1504.40px;top:566.20px;font-size:9.8px;line-height:13px;color:#2a2f3a;letter-spacing:-0.171px;">Items</span>
<span class="t" style="left:1544.00px;top:566.20px;font-size:9.8px;line-height:13px;color:#2a2f3a;letter-spacing:-0.477px;">1 - 29</span>
<span class="t" style="left:1591.50px;top:566.20px;font-size:9.8px;line-height:13px;color:#2a2f3a;letter-spacing:-0.179px;">of 29</span>
<span class="t" style="left:275.10px;top:613.73px;font-size:15.5px;line-height:20px;color:#15181f;letter-spacing:0.040px;">My Outstanding Tasks</span>
<span class="t" style="left:262.80px;top:652.96px;font-size:10.5px;line-height:14px;color:#0d0f14;font-weight:700;letter-spacing:0.176px;">Completed (2)</span>
<span class="t" style="left:488.00px;top:652.96px;font-size:10.5px;line-height:14px;color:#0d0f14;font-weight:700;">In Progress (6)</span>
<span class="t" style="left:715.40px;top:652.96px;font-size:10.5px;line-height:14px;color:#0d0f14;font-weight:700;letter-spacing:0.307px;">Not Started (14)</span>
<span class="t" style="left:275.10px;top:693.23px;font-size:15.5px;line-height:20px;color:#1a73d4;letter-spacing:-0.140px;">Assign Deal Team</span>
<span class="t" style="left:275.10px;top:719.81px;font-size:9.5px;line-height:12px;color:#15181f;font-weight:700;-webkit-text-stroke:0.2px;">Due Date</span>
<span class="t" style="left:275.10px;top:734.66px;font-size:10.5px;line-height:14px;color:#3a4a78;letter-spacing:0.011px;">Dec 13, 2023</span>
<span class="t" style="left:275.10px;top:759.01px;font-size:9.5px;line-height:12px;color:#15181f;font-weight:700;-webkit-text-stroke:0.2px;">Priority</span>
<span class="t" style="left:275.10px;top:772.96px;font-size:10.5px;line-height:14px;color:#3a4a78;letter-spacing:0.523px;">Medium</span>
<span class="t" style="left:275.10px;top:798.31px;font-size:9.5px;line-height:12px;color:#15181f;font-weight:700;-webkit-text-stroke:0.2px;">Type</span>
<span class="t" style="left:275.10px;top:812.16px;font-size:10.5px;line-height:14px;color:#3a4a78;letter-spacing:0.140px;">Due Diligence</span>
<span class="t" style="left:275.10px;top:837.61px;font-size:9.5px;line-height:12px;color:#15181f;font-weight:700;-webkit-text-stroke:0.2px;">Last Note</span>
<span class="t" style="left:275.10px;top:851.36px;font-size:10.5px;line-height:14px;color:#3a4a78;">-</span>
<span class="t" style="left:501.10px;top:693.23px;font-size:15.5px;line-height:20px;color:#1a73d4;letter-spacing:-0.283px;">Review Teaser</span>
<span class="t" style="left:501.10px;top:719.81px;font-size:9.5px;line-height:12px;color:#15181f;font-weight:700;-webkit-text-stroke:0.2px;">Due Date</span>
<span class="t" style="left:501.10px;top:734.66px;font-size:10.5px;line-height:14px;color:#3a4a78;letter-spacing:-0.127px;">Jul 22, 2022</span>
<span class="t" style="left:501.10px;top:759.01px;font-size:9.5px;line-height:12px;color:#15181f;font-weight:700;-webkit-text-stroke:0.2px;">Priority</span>
<span class="t" style="left:501.10px;top:772.96px;font-size:10.5px;line-height:14px;color:#3a4a78;letter-spacing:0.078px;">Low</span>
<span class="t" style="left:501.10px;top:798.31px;font-size:9.5px;line-height:12px;color:#15181f;font-weight:700;-webkit-text-stroke:0.2px;">Type</span>
<span class="t" style="left:501.10px;top:812.16px;font-size:10.5px;line-height:14px;color:#3a4a78;letter-spacing:0.143px;">Market Review</span>
<span class="t" style="left:501.10px;top:837.61px;font-size:9.5px;line-height:12px;color:#15181f;font-weight:700;-webkit-text-stroke:0.2px;">Last Note</span>
<span class="t" style="left:501.10px;top:851.36px;font-size:10.5px;line-height:14px;color:#3a4a78;">-</span>
<span class="t" style="left:727.40px;top:693.23px;font-size:15.5px;line-height:20px;color:#1a73d4;">-</span>
<span class="t" style="left:727.40px;top:719.81px;font-size:9.5px;line-height:12px;color:#15181f;font-weight:700;-webkit-text-stroke:0.2px;">Due Date</span>
<span class="t" style="left:727.40px;top:734.66px;font-size:10.5px;line-height:14px;color:#3a4a78;">-</span>
<span class="t" style="left:727.40px;top:759.01px;font-size:9.5px;line-height:12px;color:#15181f;font-weight:700;-webkit-text-stroke:0.2px;">Priority</span>
<span class="t" style="left:727.40px;top:772.96px;font-size:10.5px;line-height:14px;color:#3a4a78;">-</span>
<span class="t" style="left:727.40px;top:798.31px;font-size:9.5px;line-height:12px;color:#15181f;font-weight:700;-webkit-text-stroke:0.2px;">Type</span>
<span class="t" style="left:727.40px;top:812.16px;font-size:10.5px;line-height:14px;color:#3a4a78;">-</span>
<span class="t" style="left:727.40px;top:837.61px;font-size:9.5px;line-height:12px;color:#15181f;font-weight:700;-webkit-text-stroke:0.2px;">Last Note</span>
<span class="t" style="left:727.40px;top:851.36px;font-size:10.5px;line-height:14px;color:#3a4a78;">-</span>
<span class="t" style="left:980.40px;top:613.73px;font-size:15.5px;line-height:20px;color:#15181f;letter-spacing:0.215px;">My Activity Notifications</span>
<span class="t" style="left:983.70px;top:655.31px;font-size:9.5px;line-height:12px;color:#0d0f14;font-weight:700;letter-spacing:0.041px;-webkit-text-stroke:0.2px;">Subject</span>
<span class="t" style="left:1095.00px;top:655.31px;font-size:9.5px;line-height:12px;color:#0d0f14;font-weight:700;letter-spacing:0.227px;-webkit-text-stroke:0.2px;">Date</span>
<span class="t" style="left:1208.20px;top:648.61px;font-size:9.5px;line-height:12px;color:#0d0f14;font-weight:700;letter-spacing:0.423px;-webkit-text-stroke:0.2px;">Internal</span>
<span class="t" style="left:1208.20px;top:661.71px;font-size:9.5px;line-height:12px;color:#0d0f14;font-weight:700;letter-spacing:0.207px;-webkit-text-stroke:0.2px;">Attendees</span>
<span class="t" style="left:1321.30px;top:655.31px;font-size:9.5px;line-height:12px;color:#0d0f14;font-weight:700;-webkit-text-stroke:0.2px;">Type</span>
<span class="t" style="left:1434.00px;top:655.31px;font-size:9.5px;line-height:12px;color:#0d0f14;font-weight:700;letter-spacing:0.009px;-webkit-text-stroke:0.2px;">Companies</span>
<span class="t" style="left:1547.00px;top:655.31px;font-size:9.5px;line-height:12px;color:#0d0f14;font-weight:700;letter-spacing:0.030px;-webkit-text-stroke:0.2px;">Contacts</span>
<span class="t" style="left:983.70px;top:721.50px;font-size:9.8px;line-height:13px;color:#2079d3;letter-spacing:-0.137px;">Project Outlaw</span>
<span class="t" style="left:983.70px;top:734.80px;font-size:9.8px;line-height:13px;color:#2079d3;letter-spacing:-0.149px;">Management</span>
<span class="t" style="left:983.70px;top:747.60px;font-size:9.8px;line-height:13px;color:#2079d3;letter-spacing:-0.160px;">Presentation</span>
<span class="t" style="left:1096.40px;top:735.10px;font-size:9.8px;line-height:13px;color:#36425e;letter-spacing:-0.407px;">Dec 22, 2023</span>
<span class="t" style="left:1209.30px;top:728.10px;font-size:9.8px;line-height:13px;color:#2079d3;letter-spacing:-0.208px;">John Stonemount<span style="color:#36425e">;</span></span>
<span class="t" style="left:1209.30px;top:740.90px;font-size:9.8px;line-height:13px;color:#2079d3;letter-spacing:-0.108px;">Dalton White</span>
<span class="t" style="left:1322.30px;top:735.00px;font-size:9.8px;line-height:13px;color:#36425e;letter-spacing:-0.094px;">Meeting</span>
<span class="t" style="left:1435.10px;top:735.00px;font-size:9.8px;line-height:13px;color:#2079d3;letter-spacing:-0.362px;">Texas Roadhouse</span>
<span class="t" style="left:1548.10px;top:735.00px;font-size:9.8px;line-height:13px;color:#2079d3;letter-spacing:-0.452px;">Chris Jacobsen</span>
<span class="t" style="left:983.70px;top:806.20px;font-size:9.8px;line-height:13px;color:#2079d3;letter-spacing:-0.113px;">Follow up with</span>
<span class="t" style="left:983.70px;top:819.50px;font-size:9.8px;line-height:13px;color:#2079d3;letter-spacing:-0.386px;">Angela</span>
<span class="t" style="left:1096.40px;top:812.80px;font-size:9.8px;line-height:13px;color:#36425e;letter-spacing:-0.407px;">Dec 20, 2023</span>
<span class="t" style="left:1209.30px;top:812.00px;font-size:9.8px;line-height:13px;color:#2079d3;letter-spacing:-0.220px;">John Stonemount</span>
<span class="t" style="left:1322.30px;top:812.00px;font-size:9.8px;line-height:13px;color:#36425e;letter-spacing:-0.334px;">Phone Call</span>
<span class="t" style="left:1435.10px;top:812.00px;font-size:9.8px;line-height:13px;color:#2079d3;letter-spacing:-0.168px;">Spotify Ltd.</span>
<span class="t" style="left:1548.10px;top:812.00px;font-size:9.8px;line-height:13px;color:#2079d3;letter-spacing:-0.284px;">Angela Watts</span>
</div></div>
</div>
</body>
</html>
